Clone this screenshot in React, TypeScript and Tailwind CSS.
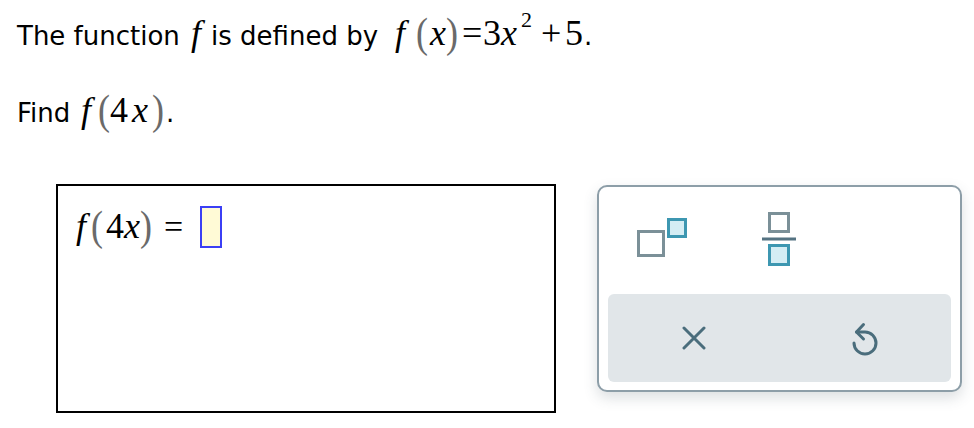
import React from 'react';

const serif = "font-['Liberation_Serif',serif] text-[36px]";

function Paren({ children, className }: { children: React.ReactNode; className: string }) {
  return (
    <span className={`inline-block scale-y-[1.2] text-[#6a6a6a] ${className}`}>{children}</span>
  );
}

function SuperscriptIcon() {
  return (
    <svg width="50" height="39" viewBox="0 0 50 39">
      <rect x="1.5" y="13.5" width="25" height="24" fill="none" stroke="#7b9098" strokeWidth="3" />
      <rect x="31.5" y="1.5" width="17" height="17" fill="#d4edf4" stroke="#3d97b1" strokeWidth="3" />
    </svg>
  );
}

function FractionIcon() {
  return (
    <svg width="34" height="54" viewBox="0 0 34 54">
      <rect x="7.5" y="1.5" width="19" height="18" fill="none" stroke="#7b9098" strokeWidth="3" />
      <rect x="0" y="25.5" width="34" height="3" fill="#557382" />
      <rect x="7.5" y="33.5" width="19" height="19" fill="#d4edf4" stroke="#3d97b1" strokeWidth="3" />
    </svg>
  );
}

function ClearIcon() {
  return (
    <svg width="24" height="24" viewBox="0 0 24 24" fill="none" stroke="#4a6d7c" strokeWidth="3" strokeLinecap="round">
      <path d="M2 2 22 22M22 2 2 22" />
    </svg>
  );
}

function UndoIcon() {
  return (
    <svg width="42" height="45" viewBox="0 0 42 45" fill="none" stroke="#4a6d7c" strokeWidth="3" strokeLinecap="round" strokeLinejoin="round">
      <path d="M12.5 16H21A11 11 0 1 1 10 27" />
      <path d="M19.5 8.5 12.5 16 19.5 23" />
    </svg>
  );
}

export default function App() {
  return (
    <div className="w-[974px] h-[428px] bg-white pl-[17px] pt-[21px] text-black text-[26px] font-['DejaVu_Sans',sans-serif]">
      {/* line 1 */}
      <div className="h-[30px] flex items-baseline whitespace-nowrap leading-[30px]">
        <span className="w-[174px]">The function</span>
        <i className={`${serif} leading-[24px] w-[20px]`}>f</i>
        <span className="w-[184px]">is defined by</span>
        <span className={`${serif} leading-[24px] flex items-baseline`}>
          <i className="w-[21px]">f</i>
          <Paren className="w-[14px]">(</Paren>
          <i className="w-[16px]">x</i>
          <Paren className="w-[16px]">)</Paren>
          <span className="w-[21px]">=</span>
          <span className="w-[18px]">3</span>
          <i className="w-[20px]">x</i>
          <span className="w-[20px] relative -top-[18px] text-[22px]">2</span>
          <span className="w-[24px]">+</span>
          <span className="w-[19px]">5</span>
        </span>
        <span>.</span>
      </div>

      {/* line 2 */}
      <div className="mt-[47px] h-[30px] flex items-baseline whitespace-nowrap leading-[30px]">
        <span className="w-[64px]">Find</span>
        <span className={`${serif} leading-[24px] flex items-baseline`}>
          <i className="w-[17px]">f</i>
          <Paren className="w-[12px]">(</Paren>
          <span className="w-[22px]">4</span>
          <i className="w-[20px]">x</i>
          <Paren className="w-[14px]">)</Paren>
        </span>
        <span>.</span>
      </div>

      <div className="ml-[39px] mt-[56px] flex gap-[41px] items-start">
        {/* answer box */}
        <div className="w-[500px] h-[229px] border-2 border-black pt-[20px] pl-[18px]">
          <div className="flex items-start">
            <span className={`${serif} leading-[40px] flex items-baseline whitespace-nowrap`}>
              <i className="w-[15px]">f</i>
              <Paren className="w-[15px]">(</Paren>
              <span className="w-[18px]">4</span>
              <i className="w-[16px]">x</i>
              <Paren className="w-[24px]">)</Paren>
              <span className="w-[36px] text-[34px]">=</span>
            </span>
            <div className="w-[22px] h-[42px] border-2 border-[#3b3ff5] bg-[#fffad6]" />
          </div>
        </div>

        {/* keypad */}
        <div className="mt-px w-[365px] h-[207px] rounded-[10px] border-2 border-[#8d9ea8] bg-white px-[9px] pb-[8px] shadow-[0_6px_14px_rgba(60,80,90,0.18)]">
          <div className="-mx-[5px] h-[104px] grid grid-cols-3 items-center justify-items-center">
            <div className="-mt-[3px]">
              <SuperscriptIcon />
            </div>
            <FractionIcon />
            <div />
          </div>
          <div className="mt-[3px] h-[88px] rounded-[6px] bg-[#e1e6e9] grid grid-cols-2 items-center justify-items-center">
            <ClearIcon />
            <UndoIcon />
          </div>
        </div>
      </div>
    </div>
  );
}
